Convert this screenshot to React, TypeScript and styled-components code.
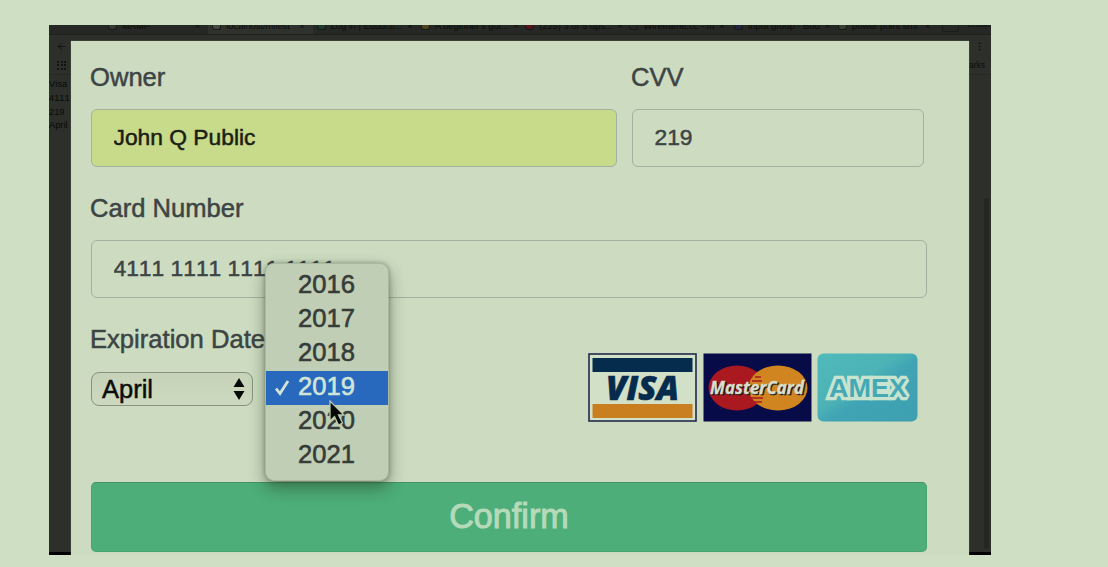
import React, { useState } from "react";
import styled, { createGlobalStyle } from "styled-components";
import { FiArrowLeft, FiMoreVertical } from "react-icons/fi";

const palette = {
    page: "#cfdfc3",
    modal: "#cddcc1",
    backdrop: "#2c2f2a",
    text: "#3d4444",
    border: "#a3b19f",
    autofill: "#c7db8b",
    highlight: "#2868bd",
    green: "#4dae79",
};

const GlobalStyle = createGlobalStyle`
    * {
        box-sizing: border-box;
    }
    body {
        margin: 0;
        background-color: ${palette.page};
        font-family: "Liberation Sans", Arial, sans-serif;
    }
`;

const Page = styled.div`
    height: 567px;
    padding: 25px 0 0 49px;
    overflow: hidden;
`;

const Browser = styled.div`
    position: relative;
    width: 942px;
    height: 530px;
    overflow: hidden;
    background: linear-gradient(${palette.backdrop} 527px, #000 527px);
`;

const TabBar = styled.div`
    display: flex;
    height: 10px;
    padding-left: 55px;
    overflow: hidden;
    background-color: #252824;
    border-bottom: 1px solid #1d201c;
`;

const Tab = styled.div<{ $active?: boolean }>`
    display: flex;
    flex: 0 0 104.3px;
    gap: 5px;
    height: 10px;
    padding: 0 8px 0 4px;
    overflow: hidden;
    line-height: 12px;
    font-size: 9.3px;
    color: #0c0e0b;
    white-space: nowrap;
    background-color: ${({ $active }) => ($active ? "#2e312c" : "transparent")};
    .tab-title {
        flex: 0 0 67px;
        margin-top: -5px;
    }
    .tab-close {
        margin: -5px 0 0 auto;
    }
`;

const Favicon = styled.span<{ $color: string }>`
    flex: none;
    width: 9px;
    height: 5px;
    background-color: ${({ $color }) => $color};
    border: 1px solid #171a17;
    border-top: 0;
    border-radius: 0 0 3px 3px;
`;

const NewTab = styled.span`
    width: 17px;
    height: 7px;
    margin-left: 4px;
    border: 1px solid #1a1c19;
    border-top: 0;
    border-radius: 0 0 3px 3px;
`;

const ProfileName = styled.span`
    margin: -6px 0 0 8px;
    line-height: 12px;
    font-size: 8px;
    color: #0c0e0b;
`;

const ToolRow = styled.div`
    display: flex;
    align-items: center;
    justify-content: space-between;
    height: 22px;
    padding: 0 6px 0 7px;
    color: #111310;
    svg {
        width: 11px;
        height: 11px;
    }
`;

const BookmarkRow = styled.div`
    display: flex;
    align-items: center;
    justify-content: space-between;
    height: 18px;
    padding: 0 6px 1px 8px;
    font-size: 8.5px;
    color: #0b0d0a;
    border-bottom: 1px solid #252823;
`;

const AppsGrid = styled.div`
    display: grid;
    grid-template-columns: repeat(3, 2px);
    gap: 1.5px;
    i {
        height: 2px;
        background-color: #131512;
    }
`;

const PostedValues = styled.div`
    display: flex;
    justify-content: space-between;
    padding-top: 3px;
    line-height: 13.8px;
    font-size: 9.3px;
    font-kerning: none;
    color: #080a08;
`;

const Scrollbar = styled.div`
    width: 5px;
    height: 351px;
    margin: 120px 2px 0 0;
    background-color: #242621;
    border-radius: 3px;
`;

/* the dialog lies over the dimmed browser */
const Modal = styled.form`
    position: absolute;
    top: 15.5px;
    left: 22px;
    width: 898px;
    height: 514.5px;
    padding: 20.5px 42px 0 20px;
    background-color: ${palette.modal};
    box-shadow: 0 0 1px #829079;
`;

const FieldRow = styled.div`
    display: grid;
    grid-template-columns: 526px 292px;
    gap: 15px;
    margin-bottom: 25px;
`;

const Field = styled.div`
    display: flex;
    flex-direction: column;
`;

const Label = styled.label`
    height: 31px;
    margin-left: -1px;
    padding-top: 1px;
    line-height: 31px;
    font-size: 25.6px;
    color: ${palette.text};
    -webkit-text-stroke: 0.5px ${palette.text};
    white-space: nowrap;
`;

const Input = styled.input<{ $filled?: boolean }>`
    width: 100%;
    height: 58px;
    margin-top: 17px;
    padding: 0 21.5px 1px;
    font-family: inherit;
    font-size: 22.8px;
    font-kerning: none;
    color: ${({ $filled }) => ($filled ? "#1b2012" : palette.text)};
    -webkit-text-stroke: 0.5px currentColor;
    background-color: ${({ $filled }) => ($filled ? palette.autofill : "transparent")};
    border: 1.5px solid ${palette.border};
    border-radius: 6px;
    outline: none;
`;

const PaymentRow = styled.div`
    display: flex;
    justify-content: space-between;
    height: 160px;
    margin-top: 25px;
    padding-right: 9px;
`;

const MonthSelect = styled.button`
    display: flex;
    align-items: center;
    justify-content: space-between;
    width: 162px;
    height: 34px;
    margin-top: 18px;
    padding: 1px 7px 0 10px;
    font-family: inherit;
    font-size: 25.5px;
    color: #0b0d0a;
    -webkit-text-stroke: 0.5px currentColor;
    background: linear-gradient(#c7d3b8, #ccd9bf);
    border: 1.5px solid #87937f;
    border-radius: 8px;
    svg {
        margin-top: -2px;
    }
`;

const Cards = styled.div`
    display: flex;
    gap: 5.5px;
    padding-top: 29.5px;
    svg {
        display: block;
    }
`;

const ConfirmButton = styled.button`
    display: block;
    width: 836px;
    height: 70px;
    margin-top: -1px;
    padding: 0 0 1px;
    font-family: inherit;
    font-size: 34.2px;
    color: #b5dab9;
    -webkit-text-stroke: 1px currentColor;
    background-color: ${palette.green};
    border: 1px solid #47a572;
    border-top-color: #429369;
    border-radius: 5px;
`;

const YearMenu = styled.ul`
    position: absolute;
    top: 222.5px;
    left: 194px;
    width: 124px;
    height: 218px;
    margin: 0;
    padding: 5px 0 0;
    list-style: none;
    background-color: #bfceb5;
    border: 1px solid #a9b8a1;
    border-radius: 9px;
    box-shadow: 0 7px 16px rgba(30, 45, 25, 0.45), 0 0 4px rgba(30, 45, 25, 0.35);
`;

const YearItem = styled.li<{ $selected: boolean }>`
    display: flex;
    align-items: center;
    height: 34px;
    padding: 0 0 3px 9px;
    font-size: 25.6px;
    font-kerning: none;
    color: ${({ $selected }) => ($selected ? "#d1e4d8" : "#363c38")};
    -webkit-text-stroke: 0.6px currentColor;
    background-color: ${({ $selected }) => ($selected ? palette.highlight : "transparent")};
    .year-check {
        width: 23px;
        height: 20px;
    }
`;

const Pointer = styled.svg`
    position: absolute;
    top: 359px;
    left: 257px;
`;

const tabs = [
    { title: "MAMP", color: "#343832" },
    { title: "localhost/milest", color: "#444940", active: true },
    { title: "Log in | Edducti...", color: "#1c3a29" },
    { title: "A beginner's gui...", color: "#4d4220" },
    { title: "(225) 3 or 5 ups...", color: "#54151a" },
    { title: "Wireframe.cc - m", color: "#262923" },
    { title: "Input group · Boo", color: "#232340" },
    { title: "power point smi", color: "#35402e" },
];

const years = ["2016", "2017", "2018", "2019", "2020", "2021"];

const VisaCard: React.FC = () => (
    <svg width="109" height="69" viewBox="0 0 109 69">
        <rect x="1" y="1" width="107" height="67" fill="#d3e0c8" stroke="#20294b" strokeWidth="1.6" />
        <rect x="4.5" y="5" width="100" height="14" fill="#052c4c" />
        <rect x="4.5" y="51" width="100" height="14" fill="#c97f20" />
        <text x="18" y="46.5" fontFamily="Open Sans" fontSize="33" fontWeight="800" fontStyle="italic"
            textLength="73" lengthAdjust="spacingAndGlyphs" fill="#062b4d" stroke="#062b4d" strokeWidth="0.6"
        >VISA</text>
    </svg>
);

const MasterCard: React.FC = () => (
    <svg width="109" height="69" viewBox="0 0 109 69">
        <rect x="0.5" y="0.5" width="108" height="68" fill="#070b47" />
        <ellipse cx="34" cy="35" rx="28.5" ry="22.5" fill="#aa1820" />
        <ellipse cx="75" cy="35" rx="29.5" ry="22.5" fill="#d08520" />
        <path d="M52 24h6M49 28h10M48 45h12M51 49h8" stroke="#aa1820" strokeWidth="1.6" />
        <g fontFamily="Open Sans" fontSize="17" fontWeight="700" fontStyle="italic">
            <text x="8.2" y="41.7" textLength="94" lengthAdjust="spacingAndGlyphs"
                fill="#24151a" stroke="#24151a" strokeWidth="0.6" aria-hidden="true"
            >MasterCard</text>
            <text x="7" y="40.5" textLength="94" lengthAdjust="spacingAndGlyphs"
                fill="#d6dfcb" stroke="#d6dfcb" strokeWidth="0.3"
            >MasterCard</text>
        </g>
    </svg>
);

const AmexCard: React.FC = () => (
    <svg width="101" height="69" viewBox="0 0 101 69">
        <defs>
            <linearGradient id="amex" x1="0" y1="0" x2="1" y2="1">
                <stop offset="0" stopColor="#50babb" />
                <stop offset="0.42" stopColor="#4cb2b6" />
                <stop offset="0.55" stopColor="#40a4b4" />
                <stop offset="1" stopColor="#3ea0b1" />
            </linearGradient>
        </defs>
        <rect x="0.5" y="0.5" width="100" height="68" rx="6" fill="url(#amex)" />
        <text x="12" y="43.5" fontFamily="Liberation Sans" fontSize="26" fontWeight="700"
            textLength="78" lengthAdjust="spacingAndGlyphs" fill="#45a9b5"
            stroke="#c8e3ce" strokeWidth="6.5" paintOrder="stroke" strokeLinejoin="miter" strokeMiterlimit="2"
        >AMEX</text>
    </svg>
);

const App: React.FC = () => {
    const [owner, setOwner] = useState("John Q Public");
    const [cvv, setCvv] = useState("219");
    const [cardNumber, setCardNumber] = useState("4111 1111 1111 1111");
    const [year, setYear] = useState("2019");

    return (
        <Page>
            <GlobalStyle />
            <Browser>
                <TabBar>
                    {tabs.map((tab) => (
                        <Tab key={tab.title} $active={tab.active}>
                            <Favicon $color={tab.color} />
                            <span className="tab-title">{tab.title}</span>
                            <span className="tab-close">×</span>
                        </Tab>
                    ))}
                    <NewTab />
                    <ProfileName>Ehsan</ProfileName>
                </TabBar>
                <ToolRow>
                    <FiArrowLeft />
                    <FiMoreVertical />
                </ToolRow>
                <BookmarkRow>
                    <AppsGrid>
                        {Array.from({ length: 9 }, (_, index) => <i key={index} />)}
                    </AppsGrid>
                    <span>arks</span>
                </BookmarkRow>
                <PostedValues>
                    <div>Visa<br />4111<br />219<br />April</div>
                    <Scrollbar />
                </PostedValues>

                <Modal onSubmit={(event) => event.preventDefault()}>
                    <FieldRow>
                        <Field>
                            <Label htmlFor="owner">Owner</Label>
                            <Input id="owner" $filled value={owner} onChange={(e) => setOwner(e.target.value)} />
                        </Field>
                        <Field>
                            <Label htmlFor="cvv">CVV</Label>
                            <Input id="cvv" value={cvv} onChange={(e) => setCvv(e.target.value)} />
                        </Field>
                    </FieldRow>
                    <Field>
                        <Label htmlFor="card-number">Card Number</Label>
                        <Input id="card-number" value={cardNumber} onChange={(e) => setCardNumber(e.target.value)} />
                    </Field>
                    <PaymentRow>
                        <Field>
                            <Label>Expiration Date</Label>
                            <MonthSelect type="button">
                                April
                                <svg width="12" height="24" viewBox="0 0 12 24">
                                    <path d="M6 1l5.5 9H.5zM6 23L.5 14h11z" fill="#080a08" />
                                </svg>
                            </MonthSelect>
                        </Field>
                        <Cards>
                            <VisaCard />
                            <MasterCard />
                            <AmexCard />
                        </Cards>
                    </PaymentRow>
                    <ConfirmButton type="submit">Confirm</ConfirmButton>

                    <YearMenu>
                        {years.map((item) => (
                            <YearItem key={item} $selected={item === year} onClick={() => setYear(item)}>
                                <svg className="year-check" viewBox="0 0 23 20">
                                    {item === year && (
                                        <path d="M1 11.5l4 5L13 4" fill="none" stroke="#d1e4d8" strokeWidth="2.8" />
                                    )}
                                </svg>
                                {item}
                            </YearItem>
                        ))}
                    </YearMenu>
                    <Pointer width="20" height="30" viewBox="0 0 20 30">
                        <path d="M2 1v20l4.5-4.5 4 8.5 4-2-4-8H16z" fill="#070907" stroke="#b7c8ae" strokeWidth="1.3" />
                    </Pointer>
                </Modal>
            </Browser>
        </Page>
    );
};

export default App;
